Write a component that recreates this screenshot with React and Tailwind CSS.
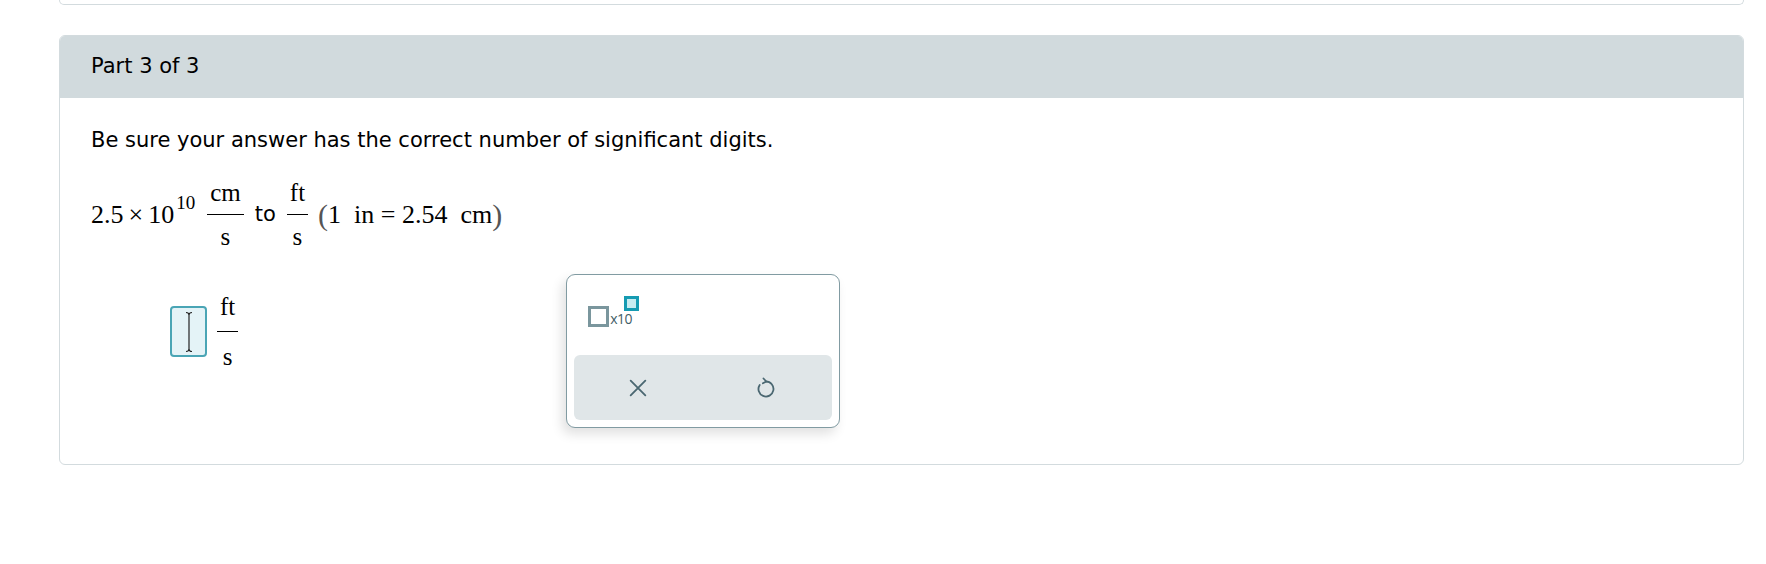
import React from "react";

const serif = { fontFamily: '"Liberation Serif", "Times New Roman", serif' };

function Frac({ top, bottom, gap = "my-[7px]", className = "" }) {
  return (
    <span className={"inline-flex flex-col items-center align-middle mx-[6px] " + className}>
      <span className="leading-none px-[3px]">{top}</span>
      <span className={"block w-full h-px bg-black " + gap} />
      <span className="leading-none px-[3px]">{bottom}</span>
    </span>
  );
}

function UndoIcon() {
  return (
    <svg width="24" height="24" viewBox="0 0 24 24" fill="none" stroke="#4a6771" strokeWidth="1.8" strokeLinecap="round" strokeLinejoin="round">
      <path d="M11 5.5a7.5 7.5 0 1 1-6.3 3.4" />
      <path d="M8.5 2.5l2.8 3-3.4 1.8" />
    </svg>
  );
}

export default function App() {
  return (
    <div className="w-[1766px] h-[564px] bg-white font-['DejaVu_Sans',sans-serif] text-black">
      <div className="ml-[59px] w-[1685px]">
        <div className="h-[5px] border-x border-b border-[#d3dbde] rounded-b-[6px]" />

        <div className="mt-[30px] border border-[#d3dbde] rounded-[6px] overflow-hidden">
          <div className="h-[62px] bg-[#d1dadd] flex items-center pl-[31px] text-[21px]">
            Part 3 of 3
          </div>

          <div className="pl-[31px] pt-[28px] pb-[36px]">
            <p className="text-[21px] leading-[28px]">
              Be sure your answer has the correct number of significant digits.
            </p>

            <div className="mt-[26px] flex items-center text-[26px]" style={serif}>
              <span>2.5</span>
              <span className="mx-[5px]">×</span>
              <span>10</span>
              <span className="text-[19px] relative -top-[11px] ml-[2px]">10</span>
              <Frac top="cm" bottom="s" gap="my-[9px]" className="ml-[12px] text-[25px]" />
              <span className="font-['DejaVu_Sans',sans-serif] text-[21px] mx-[5px]">to</span>
              <Frac top="ft" bottom="s" gap="my-[9px]" className="text-[25px]" />
              <span className="ml-[4px] text-[30px] text-[#555] leading-none">(</span>
              <span className="text-[26px]">1&nbsp; in = 2.54&nbsp; cm</span>
              <span className="text-[30px] text-[#555] leading-none">)</span>
            </div>

            <div className="mt-[25px] flex items-start">
              <div className="flex items-center mt-[20px] ml-[79px]">
                <div className="w-[37px] h-[51px] rounded-[4px] border-2 border-[#4aa5b5] bg-[#e4f3f7] flex items-center justify-center">
                  <svg width="10" height="42" viewBox="0 0 10 42" fill="none" stroke="#222" strokeWidth="1.2">
                    <path d="M2 1.5q3 0 3 2.5q0-2.5 3-2.5" />
                    <path d="M5 4v34" />
                    <path d="M2 40.5q3 0 3-2.5q0 2.5 3 2.5" />
                  </svg>
                </div>
                <span style={serif} className="text-[25px] ml-[4px]">
                  <Frac top="ft" bottom="s" gap="my-[12px]" />
                </span>
              </div>

              <div className="ml-[322px] w-[274px] h-[154px] rounded-[9px] border border-[#819ba2] bg-white shadow-[-4px_6px_12px_rgba(0,0,0,0.12)] flex flex-col">
                <div className="h-[80px] pl-[21px] pt-[21px]">
                  <div className="relative w-[60px] h-[36px]">
                    <div className="absolute left-0 top-[10px] w-[21px] h-[21px] border-[3px] border-[#7a969d] bg-white" />
                    <span className="absolute left-[22px] top-[16px] text-[14px] leading-none text-[#3f5d66] font-['Open_Sans',sans-serif] font-medium tracking-[-0.5px]">x10</span>
                    <div className="absolute left-[36px] top-0 w-[15px] h-[15px] border-[3px] border-[#159bb2] bg-[#c8ecf1]" />
                  </div>
                </div>
                <div className="mx-[7px] h-[65px] rounded-[6px] bg-[#e0e6e8] flex items-center justify-around">
                  <svg width="22" height="22" viewBox="0 0 24 24" fill="none" stroke="#4a6771" strokeWidth="2" strokeLinecap="round">
                    <path d="M4 4l16 16M20 4L4 20" />
                  </svg>
                  <UndoIcon />
                </div>
              </div>
            </div>
          </div>
        </div>
      </div>
    </div>
  );
}
